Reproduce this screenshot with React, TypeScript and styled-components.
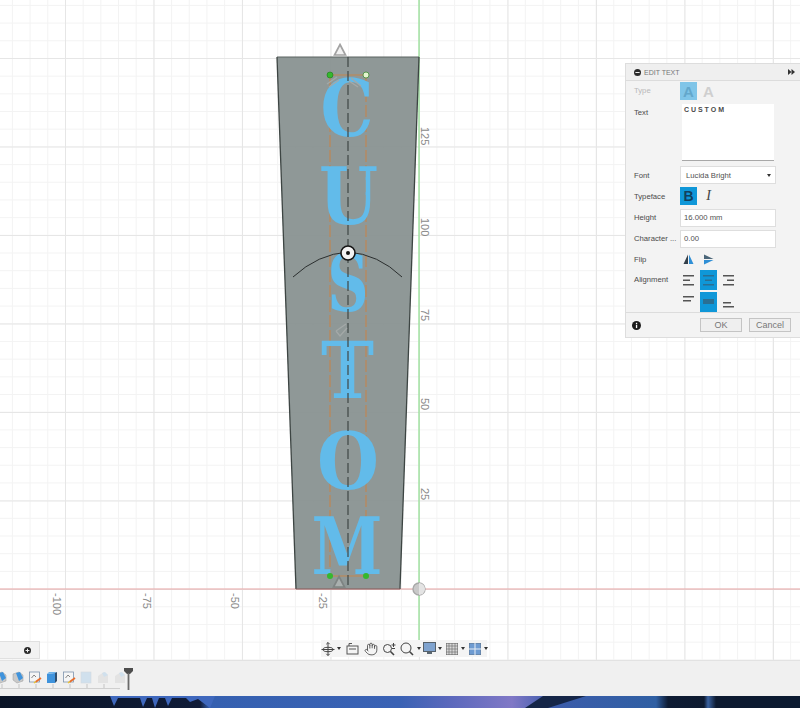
import React, { FC } from "react";
import styled, { createGlobalStyle } from "styled-components";
import { Hand } from "lucide-react";

const GlobalStyle = createGlobalStyle`
  html, body {
    margin: 0;
    padding: 0;
    background: #ffffff;
    font-family: "Liberation Sans", Arial, sans-serif;
  }
`;

const Page = styled.div`
  width: 800px;
  height: 708px;
  display: flex;
  flex-direction: column;
  overflow: hidden;
`;

const Viewport = styled.div`
  position: relative;
  height: 660px;
  flex: none;
  background-color: #ffffff;
  background-image:
    linear-gradient(to right, #e6e6e6 1px, transparent 1px),
    linear-gradient(to bottom, #e6e6e6 1px, transparent 1px),
    linear-gradient(to right, #f3f3f3 1px, transparent 1px),
    linear-gradient(to bottom, #f3f3f3 1px, transparent 1px);
  background-size: 88.5px 88.5px, 88.5px 88.5px, 17.7px 17.7px, 17.7px 17.7px;
  background-position: 65px 0, 0 58px, 11.9px 0, 0 4.9px;
`;

const Sketch = styled.svg`
  position: absolute;
  inset: 0;
  width: 800px;
  height: 660px;
`;

const SheetLetter = styled.text`
  font-family: "DejaVu Serif", "Liberation Serif", serif;
  font-weight: 700;
  font-size: 78px;
  fill: #62bbea;
  text-anchor: middle;
`;

const AxisLabel = styled.text`
  font-family: "Liberation Sans", Arial, sans-serif;
  font-size: 11px;
  fill: #8a8a8a;
`;

/* edit text dialog */
const Panel = styled.div`
  position: absolute;
  left: 625px;
  top: 63px;
  width: 175px;
  height: 275px;
  box-sizing: border-box;
  display: flex;
  flex-direction: column;
  background: #f3f3f3;
  border: 1px solid #dddddd;
  border-right: none;
  font-size: 7.7px;
  color: #4a4a4a;
`;

const PanelTitle = styled.div`
  height: 17px;
  flex: none;
  box-sizing: border-box;
  display: flex;
  align-items: center;
  gap: 3px;
  padding: 0 5px 0 8px;
  background: #efefef;
  border-bottom: 1px solid #dcdcdc;
  font-size: 7px;
  color: #777777;
`;

const TitleText = styled.span`
  flex: 1;
`;

const PanelBody = styled.div`
  flex: none;
  display: flex;
  flex-direction: column;
`;

const Row = styled.div<{ $h: number; $top?: boolean }>`
  height: ${({ $h }) => $h}px;
  flex: none;
  display: grid;
  grid-template-columns: 46px 1fr;
  align-items: ${({ $top }) => ($top ? "start" : "center")};
  padding-left: 8px;
`;

const Label = styled.div<{ $muted?: boolean; $pad?: number }>`
  color: ${({ $muted }) => ($muted ? "#b9b9b9" : "#4a4a4a")};
  padding-top: ${({ $pad }) => $pad ?? 0}px;
  white-space: nowrap;
`;

const TextBox = styled.div`
  width: 92px;
  height: 57px;
  margin: 1px 0 0 2px;
  box-sizing: border-box;
  padding: 2px 2px;
  background: #ffffff;
  border-bottom: 1px solid #a8a8a8;
  font-size: 7px;
  font-weight: 700;
  color: #4a4a4a;
  white-space: pre;
`;

const Field = styled.div`
  width: 96px;
  height: 18px;
  box-sizing: border-box;
  display: flex;
  align-items: center;
  justify-content: space-between;
  padding: 0 3px;
  background: #ffffff;
  border: 1px solid #dedede;
  color: #505050;
`;

const FontField = styled(Field)`
  padding: 0 4px 0 5px;
`;

const Caret = styled.span`
  width: 0;
  height: 0;
  flex: none;
  border-left: 2px solid transparent;
  border-right: 2px solid transparent;
  border-top: 3px solid #333333;
`;

const Tools = styled.div<{ $drop?: number }>`
  display: flex;
  align-items: center;
  gap: 3px;
  margin-top: ${({ $drop }) => $drop ?? 0}px;
`;

const ToolButton = styled.div<{ $tone?: "active" | "soft"; $tall?: boolean }>`
  width: 17px;
  height: ${({ $tall }) => ($tall ? 20 : 18)}px;
  display: flex;
  align-items: center;
  justify-content: center;
  background: ${({ $tone }) =>
    $tone === "active" ? "#0f97d8" : $tone === "soft" ? "#80c5e8" : "transparent"};
`;

const GlyphB = styled.span`
  font-family: "Liberation Sans", Arial, sans-serif;
  font-weight: 700;
  font-size: 14px;
  color: #123f5c;
`;

const GlyphI = styled.span`
  font-family: "Liberation Serif", serif;
  font-style: italic;
  font-size: 14px;
  color: #444444;
`;

const GlyphA = styled.span<{ $pale?: boolean }>`
  font-family: "Liberation Sans", Arial, sans-serif;
  font-weight: 700;
  font-size: 15px;
  color: ${({ $pale }) => ($pale ? "#cfcfcf" : "#63a7cb")};
`;

const AlignGrid = styled.div`
  display: grid;
  grid-template-columns: repeat(3, 17px);
  grid-auto-rows: 20px;
  column-gap: 3px;
  row-gap: 2px;
  margin-top: 1px;
`;

const PanelFooter = styled.div`
  flex: 1;
  display: flex;
  align-items: center;
  padding: 0 9px 0 6px;
  gap: 7px;
  border-top: 1px solid #dcdcdc;
`;

const InfoSlot = styled.div`
  flex: 1;
  display: flex;
`;

const FooterButton = styled.div`
  width: 42px;
  height: 14px;
  box-sizing: border-box;
  display: flex;
  align-items: center;
  justify-content: center;
  background: #efefef;
  border: 1px solid #c4c4c4;
  font-size: 9px;
  color: #777777;
`;

/* navigation bars along the bottom of the viewport */
const BrowserTab = styled.div`
  position: absolute;
  left: 0;
  top: 641px;
  width: 40px;
  height: 18px;
  box-sizing: border-box;
  display: flex;
  align-items: center;
  justify-content: flex-end;
  padding-right: 8px;
  background: #f2f2f2;
  border: 1px solid #e0e0e0;
  border-left: none;
`;

const NavBar = styled.div`
  position: absolute;
  left: 321px;
  top: 640px;
  width: 166px;
  height: 17px;
  display: flex;
  align-items: center;
  background: #f4f4f4;
`;

const NavSlot = styled.div<{ $w: number }>`
  width: ${({ $w }) => $w}px;
  flex: none;
  display: flex;
  align-items: center;
  justify-content: center;
`;

/* timeline */
const Timeline = styled.div`
  position: relative;
  height: 36px;
  flex: none;
  box-sizing: border-box;
  background: #f0f0f0;
  border-top: 1px solid #e2e2e2;
  display: flex;
  padding-top: 9px;
  overflow: hidden;
`;

const TimelineTrack = styled.div`
  display: flex;
  flex-direction: column;
  margin-left: -6px;
`;

const TimelineIcons = styled.div`
  display: flex;
  gap: 3px;
`;

const TimelineIcon = styled.svg<{ $faded?: boolean }>`
  width: 14px;
  height: 14px;
  flex: none;
  opacity: ${({ $faded }) => ($faded ? 0.28 : 1)};
`;

const Ruler = styled.div`
  width: 126px;
  height: 5px;
  box-sizing: border-box;
  border-bottom: 1px solid #cfcfcf;
  background-image: linear-gradient(to right, #c4c4c4 1px, transparent 1px);
  background-size: 17px 4px;
  background-position: 7.5px 0;
  background-repeat: repeat-x;
`;

const Playhead = styled.svg`
  width: 10px;
  height: 22px;
  flex: none;
  margin: -2px 0 0 -3.5px;
`;

const Wallpaper = styled.svg`
  display: block;
  width: 800px;
  height: 12px;
  flex: none;
`;

const Letter: FC<{ ch: string; x: number; y: number; w: number }> = ({ ch, x, y, w }) => (
  <SheetLetter x={x} y={y} textLength={w} lengthAdjust="spacingAndGlyphs">
    {ch}
  </SheetLetter>
);

const VLabel: FC<{ x: number; y: number; text: string }> = ({ x, y, text }) => (
  <AxisLabel x={x} y={y} transform={`rotate(90 ${x} ${y})`}>
    {text}
  </AxisLabel>
);

const AlignIcon: FC<{ rows: [number, number, number][]; color?: string; bar?: number }> = ({
  rows,
  color = "#555555",
  bar = 1.5,
}) => (
  <svg width="13" height="16" viewBox="0 0 13 16">
    {rows.map(([x, y, w], i) => (
      <rect key={i} x={x} y={y} width={w} height={bar} fill={color} />
    ))}
  </svg>
);

const Triangle: FC<{ x: number; y: number; fill: string; stroke: string }> = ({ x, y, fill, stroke }) => (
  <polygon
    points={`${x},${y - 5.5} ${x + 5.5},${y + 5} ${x - 5.5},${y + 5}`}
    fill={fill}
    stroke={stroke}
    strokeWidth="1.7"
  />
);

const Drawing: FC = () => (
  <Sketch viewBox="0 0 800 660">
    <line x1="0" y1="589" x2="800" y2="589" stroke="#eaa6a6" strokeWidth="1.2" />
    <line x1="419" y1="0" x2="419" y2="640" stroke="#8fe08f" strokeWidth="1.2" />

    <polygon points="277,57 419,57 400,589 296,589" fill="#889290" fillOpacity="0.94" />
    <line x1="277" y1="57" x2="419" y2="57" stroke="#5a6361" strokeWidth="1" />
    <line x1="277" y1="57" x2="296" y2="589" stroke="#3d4543" strokeWidth="1.3" />
    <line x1="419" y1="57" x2="400" y2="589" stroke="#3d4543" strokeWidth="1.3" />
    <line x1="296" y1="589" x2="400" y2="589" stroke="#8a5a5a" strokeWidth="1.2" />

    <g stroke="#c4854f" strokeWidth="1.1" fill="none">
      <line x1="330" y1="75" x2="366" y2="75" />
      <line x1="330" y1="576" x2="366" y2="576" />
      <line x1="330" y1="75" x2="330" y2="576" strokeDasharray="12 3" />
      <line x1="366" y1="75" x2="366" y2="576" strokeDasharray="12 3" />
    </g>

    <Letter ch="C" x={347} y={136} w={53} />
    <Letter ch="U" x={348.5} y={224} w={59} />
    <Letter ch="S" x={348} y={311} w={41} />
    <Letter ch="T" x={347.5} y={398} w={53} />
    <Letter ch="O" x={348} y={488.5} w={62} />
    <Letter ch="M" x={347} y={574} w={71} />

    <line x1="348" y1="57" x2="348" y2="589" stroke="#3f4645" strokeWidth="1.2" strokeDasharray="10 4" />

    <path d="M293 277 Q 318 254 348 252 Q 378 254 402 277" fill="none" stroke="#2b2f2f" strokeWidth="1" />
    <circle cx="348" cy="253" r="7" fill="#f2f2f2" stroke="#141414" strokeWidth="1.6" />
    <circle cx="348" cy="253" r="2" fill="#141414" />

    <circle cx="330" cy="75" r="3" fill="#35b82e" stroke="#1d7a18" strokeWidth="0.6" />
    <circle cx="366" cy="75" r="3" fill="#e4f5cf" stroke="#3d8a35" strokeWidth="0.8" />
    <circle cx="330" cy="576" r="3" fill="#35b82e" />
    <circle cx="366" cy="576" r="3" fill="#35b82e" />

    <Triangle x={340} y={50} fill="#f1f1f1" stroke="#a2a2a2" />
    <Triangle x={339} y={582} fill="#aab0af" stroke="#7e8483" />

    <g fill="none" stroke="#a4a9a8" strokeWidth="1.3">
      <path d="M327 84 L337 77 M329 87 L339 80" />
      <path d="M349 81 L358 87 M351 78 L361 86" />
      <path d="M336 331 L346 324 M336 331 L340 336 L347 328" />
    </g>

    <circle cx="419" cy="589" r="6" fill="#c9c9c9" stroke="#a8a8a8" strokeWidth="1.4" />
    <path d="M419 583 A6 6 0 0 1 419 595 Z" fill="#e4e4e4" />

    <VLabel x={53} y={593} text="-100" />
    <VLabel x={143} y={593} text="-75" />
    <VLabel x={231} y={593} text="-50" />
    <VLabel x={319} y={593} text="-25" />
    <VLabel x={421} y={127} text="125" />
    <VLabel x={421} y={218} text="100" />
    <VLabel x={421} y={309} text="75" />
    <VLabel x={421} y={398} text="50" />
    <VLabel x={421} y={488} text="25" />
  </Sketch>
);

const EditTextPanel: FC = () => (
  <Panel>
    <PanelTitle>
      <svg width="7" height="7" viewBox="0 0 7 7">
        <circle cx="3.5" cy="3.5" r="3.5" fill="#2b2b2b" />
        <rect x="1.4" y="3" width="4.2" height="1" fill="#f0f0f0" />
      </svg>
      <TitleText>EDIT TEXT</TitleText>
      <svg width="7" height="6" viewBox="0 0 7 6">
        <polygon points="0,0 3.5,3 0,6" fill="#333" />
        <polygon points="3.5,0 7,3 3.5,6" fill="#333" />
      </svg>
    </PanelTitle>
    <PanelBody>
      <Row $h={22} $top>
        <Label $muted $pad={5}>Type</Label>
        <Tools $drop={1}>
          <ToolButton $tone="soft"><GlyphA>A</GlyphA></ToolButton>
          <ToolButton><GlyphA $pale>A</GlyphA></ToolButton>
        </Tools>
      </Row>
      <Row $h={62} $top>
        <Label $pad={5}>Text</Label>
        <TextBox>C U S T O M</TextBox>
      </Row>
      <Row $h={20}>
        <Label>Font</Label>
        <FontField>Lucida Bright<Caret /></FontField>
      </Row>
      <Row $h={22}>
        <Label>Typeface</Label>
        <Tools>
          <ToolButton $tone="active"><GlyphB>B</GlyphB></ToolButton>
          <ToolButton><GlyphI>I</GlyphI></ToolButton>
        </Tools>
      </Row>
      <Row $h={21}>
        <Label>Height</Label>
        <Field>16.000 mm</Field>
      </Row>
      <Row $h={21}>
        <Label>Character ...</Label>
        <Field>0.00</Field>
      </Row>
      <Row $h={20}>
        <Label>Flip</Label>
        <Tools>
          <ToolButton>
            <svg width="11" height="11" viewBox="0 0 11 11">
              <polygon points="5,0.5 5,10 0.5,10" fill="#333f4a" />
              <polygon points="6,0.5 6,10 10.5,10" fill="#2f8fd6" />
            </svg>
          </ToolButton>
          <ToolButton>
            <svg width="11" height="11" viewBox="0 0 11 11">
              <polygon points="1,0.5 10.5,5 1,5" fill="#4a6578" />
              <polygon points="1,6 10.5,6 1,10.5" fill="#2f8fd6" />
            </svg>
          </ToolButton>
        </Tools>
      </Row>
      <Row $h={43} $top>
        <Label $pad={6}>Alignment</Label>
        <AlignGrid>
          <ToolButton $tall><AlignIcon rows={[[1, 3, 11], [1, 7.5, 7], [1, 12, 11]]} /></ToolButton>
          <ToolButton $tall $tone="active"><AlignIcon color="#2a6f93" rows={[[1, 3, 11], [3, 7.5, 7], [1, 12, 11]]} /></ToolButton>
          <ToolButton $tall><AlignIcon rows={[[1, 3, 11], [5, 7.5, 7], [1, 12, 11]]} /></ToolButton>
          <ToolButton $tall><AlignIcon rows={[[1, 2, 11], [1, 6, 8]]} /></ToolButton>
          <ToolButton $tall $tone="active"><AlignIcon color="#2a6f93" bar={5} rows={[[1, 5, 11]]} /></ToolButton>
          <ToolButton $tall><AlignIcon rows={[[1, 8, 8], [1, 12, 11]]} /></ToolButton>
        </AlignGrid>
      </Row>
    </PanelBody>
    <PanelFooter>
      <InfoSlot>
        <svg width="9" height="9" viewBox="0 0 9 9">
          <circle cx="4.5" cy="4.5" r="4.5" fill="#1c1c1c" />
          <rect x="3.9" y="3.7" width="1.3" height="3.4" fill="#fff" />
          <rect x="3.9" y="1.8" width="1.3" height="1.2" fill="#fff" />
        </svg>
      </InfoSlot>
      <FooterButton>OK</FooterButton>
      <FooterButton>Cancel</FooterButton>
    </PanelFooter>
  </Panel>
);

const NavCaret: FC = () => (
  <NavSlot $w={8}>
    <Caret />
  </NavSlot>
);

const NavTools: FC = () => (
  <NavBar>
    <NavSlot $w={14}>
      <svg width="14" height="14" viewBox="0 0 14 14" fill="none" stroke="#444" strokeWidth="1">
        <path d="M7 0.5 V13.5 M0.5 7.5 H13.5 M5.3 2.2 L7 0.5 L8.7 2.2 M5.3 11.8 L7 13.5 L8.7 11.8" />
        <ellipse cx="7" cy="7.5" rx="5" ry="2.2" />
      </svg>
    </NavSlot>
    <NavCaret />
    <NavSlot $w={19}>
      <svg width="13" height="13" viewBox="0 0 13 13" fill="none" stroke="#555" strokeWidth="1">
        <rect x="1" y="4" width="11" height="8" />
        <path d="M3 4 V1.5 H6 M3 7 H10" />
      </svg>
    </NavSlot>
    <NavSlot $w={18}>
      <Hand size={14} color="#444" strokeWidth={1.4} />
    </NavSlot>
    <NavSlot $w={18}>
      <svg width="14" height="14" viewBox="0 0 14 14" fill="none" stroke="#444" strokeWidth="1">
        <circle cx="5.5" cy="6.5" r="4" />
        <path d="M8.5 9.5 L12 13" strokeWidth="1.6" />
        <path d="M11.5 1 V5 M9.5 3 H13.5 M10 6.5 H13" />
      </svg>
    </NavSlot>
    <NavSlot $w={17}>
      <svg width="14" height="14" viewBox="0 0 14 14" fill="none" stroke="#444" strokeWidth="1">
        <circle cx="6" cy="6" r="5" />
        <path d="M9.5 9.5 L13 13" strokeWidth="1.6" />
      </svg>
    </NavSlot>
    <NavCaret />
    <NavSlot $w={13}>
      <svg width="13" height="13" viewBox="0 0 13 13">
        <rect x="0.5" y="0.5" width="12" height="9" fill="#7fa3cf" stroke="#56616b" />
        <rect x="4" y="10" width="5" height="2" fill="#5a6670" />
      </svg>
    </NavSlot>
    <NavCaret />
    <NavSlot $w={15}>
      <svg width="12" height="12" viewBox="0 0 12 12" fill="#d8d8d8" stroke="#666" strokeWidth="0.6">
        <rect x="0.3" y="0.3" width="11.4" height="11.4" />
        <path d="M3 0 V12 M6 0 V12 M9 0 V12 M0 3 H12 M0 6 H12 M0 9 H12" />
      </svg>
    </NavSlot>
    <NavCaret />
    <NavSlot $w={15}>
      <svg width="12" height="12" viewBox="0 0 12 12">
        <rect x="0" y="0" width="12" height="12" fill="#6e9bd1" stroke="#5e6d7c" strokeWidth="0.8" />
        <path d="M6 0 V12 M0 6 H12" stroke="#e8eef5" strokeWidth="1" />
      </svg>
    </NavSlot>
    <NavCaret />
  </NavBar>
);

const BoxIcon: FC = () => (
  <TimelineIcon viewBox="0 0 14 14">
    <polygon points="2,4 8,2 12,5 12,11 6,13 2,10" fill="#c9c9c9" stroke="#9a9a9a" strokeWidth="0.5" />
    <polygon points="5,3 9,2 12,8 8,11" fill="#3f93dc" />
  </TimelineIcon>
);

const SketchIcon: FC = () => (
  <TimelineIcon viewBox="0 0 14 14">
    <rect x="1.5" y="2" width="10" height="10" fill="#f5f5f5" stroke="#7d93ad" strokeWidth="0.8" />
    <path d="M3.5 8 L6 5 L8 7" fill="none" stroke="#6a6a6a" strokeWidth="0.8" />
    <path d="M7.5 12 L13 8" stroke="#e86d2a" strokeWidth="1.8" />
    <path d="M6 13 L7.8 11.7" stroke="#e8c53a" strokeWidth="1.5" />
  </TimelineIcon>
);

const SolidIcon: FC = () => (
  <TimelineIcon viewBox="0 0 14 14">
    <polygon points="2,4 10,3 10,13 2,13" fill="#3f93dc" />
    <polygon points="2,4 4,2 12,2 10,3" fill="#6cb2ea" />
    <polygon points="10,3 12,2 12,11 10,13" fill="#2f4f70" />
  </TimelineIcon>
);

const PageIcon: FC = () => (
  <TimelineIcon viewBox="0 0 14 14" $faded>
    <rect x="2" y="2" width="10" height="11" fill="#7fb9e6" stroke="#8aa4bd" strokeWidth="0.6" />
  </TimelineIcon>
);

const ChamferIcon: FC = () => (
  <TimelineIcon viewBox="0 0 14 14" $faded>
    <polygon points="2,6 8,2 12,5 12,13 2,13" fill="#c4c4c4" />
    <polygon points="6,3 9,2 12,5 8,7" fill="#7fb9e6" />
  </TimelineIcon>
);

const TimelineBar: FC = () => (
  <Timeline>
    <TimelineTrack>
      <TimelineIcons>
        <BoxIcon />
        <BoxIcon />
        <SketchIcon />
        <SolidIcon />
        <SketchIcon />
        <PageIcon />
        <ChamferIcon />
        <ChamferIcon />
      </TimelineIcons>
      <Ruler />
    </TimelineTrack>
    <Playhead viewBox="0 0 10 22">
      <polygon points="0,0 9,0 9,3 6,6 3,6 0,3" fill="#4d4d4d" />
      <rect x="3.6" y="5" width="1.8" height="17" fill="#6a6a6a" />
    </Playhead>
  </Timeline>
);

const WallpaperStrip: FC = () => (
  <Wallpaper viewBox="0 0 800 12" preserveAspectRatio="none">
    <defs>
      <linearGradient id="sky" x1="0" x2="1" y1="0" y2="0">
        <stop offset="0" stopColor="#0a1426" />
        <stop offset="0.25" stopColor="#101c38" />
        <stop offset="0.262" stopColor="#3560b0" />
        <stop offset="0.5" stopColor="#3a62b4" />
        <stop offset="0.56" stopColor="#5a68bc" />
        <stop offset="0.64" stopColor="#8078c6" />
        <stop offset="0.69" stopColor="#3c5cab" />
        <stop offset="0.82" stopColor="#2f5fa3" />
        <stop offset="0.835" stopColor="#0e1c34" />
        <stop offset="0.88" stopColor="#0d1a30" />
        <stop offset="0.885" stopColor="#3a62a0" />
        <stop offset="0.895" stopColor="#0d1a30" />
        <stop offset="1" stopColor="#0b1a30" />
      </linearGradient>
    </defs>
    <rect width="800" height="12" fill="url(#sky)" />
    <polygon
      points="110,0 114,10 118,2 140,2 143,11 147,2 152,2 155,12 159,2 165,2 168,10 172,2 186,2 190,6 198,3 210,12 215,0"
      fill="#3f68bd"
    />
    <polygon points="543,0 586,0 548,12 525,12" fill="#152648" />
  </Wallpaper>
);

const App: FC = () => (
  <Page>
    <GlobalStyle />
    <Viewport>
      <Drawing />
      <EditTextPanel />
      <BrowserTab>
        <svg width="7" height="7" viewBox="0 0 7 7">
          <circle cx="3.5" cy="3.5" r="3.5" fill="#2a2a2a" />
          <path d="M3.5 1.6 V5.4 M1.6 3.5 H5.4" stroke="#eee" strokeWidth="1" />
        </svg>
      </BrowserTab>
      <NavTools />
    </Viewport>
    <TimelineBar />
    <WallpaperStrip />
  </Page>
);

export default App;
